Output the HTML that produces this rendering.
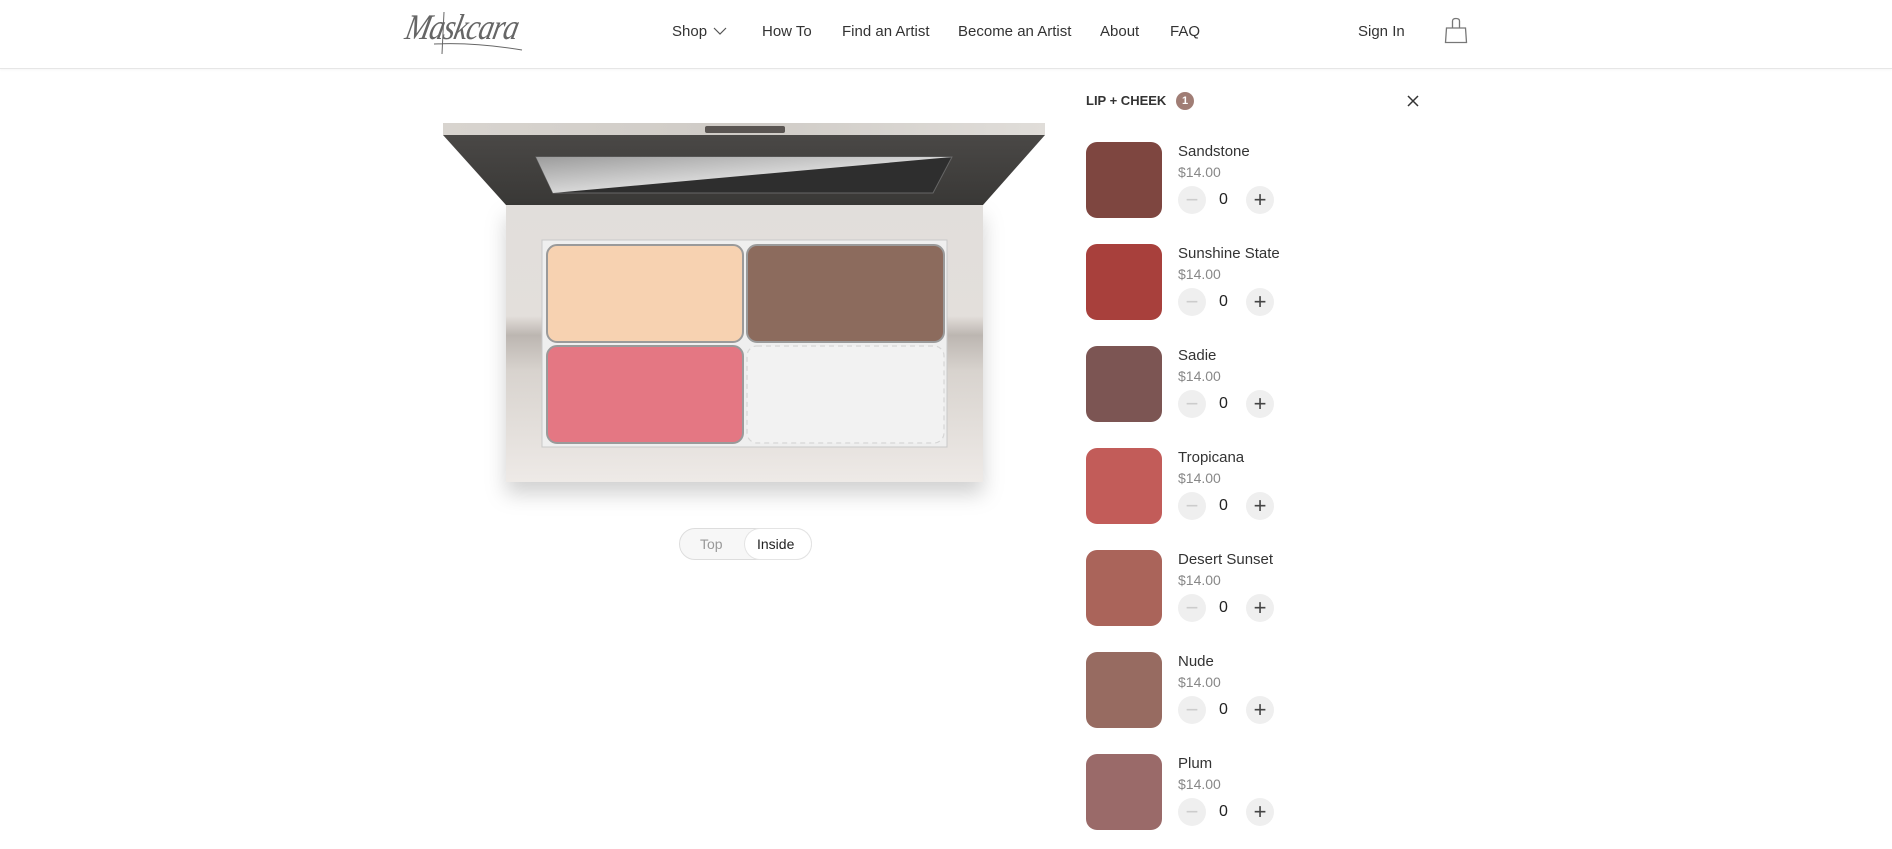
<!DOCTYPE html>
<html><head><meta charset="utf-8"><style>
*{margin:0;padding:0;box-sizing:border-box}
body{width:1892px;height:849px;background:#fff;font-family:"Liberation Sans",Arial,sans-serif;color:#333;position:relative;overflow:hidden}
.hdr{position:absolute;left:0;top:0;width:1892px;height:69px;border-bottom:1px solid #e6e6e6;box-shadow:0 1px 2px rgba(0,0,0,.04)}
.nav{position:absolute;top:23px;font-size:15px;color:#333}
.logo{position:absolute;left:406px;top:11px;font-family:"Liberation Serif",serif;font-style:italic;font-size:30px;color:#666;letter-spacing:-1px;transform:skewX(-12deg) scaleY(1.2);font-weight:normal;-webkit-text-stroke:0}
.a{position:absolute}
.sw{position:absolute;left:1086px;width:76px;height:76px;border-radius:11px}
.nm{position:absolute;left:1178px;font-size:15px;color:#333}
.pr{position:absolute;left:1178px;font-size:14px;color:#888}
.btn{position:absolute;width:28px;height:28px;border-radius:50%;background:#efefef;text-align:center;line-height:27px;font-size:22px}
.q{position:absolute;left:1219px;font-size:16px;color:#222}
</style></head><body>
<div class="hdr">
 <div class="logo">Maskcara</div>
 <svg class="a" style="left:404px;top:8px" width="125" height="48"><path d="M40 4 L38 46 M30 36 Q70 34 118 42" stroke="#666" stroke-width="1" fill="none"/></svg>
 <div class="nav" style="left:672px">Shop <svg width="14" height="10" style="margin-left:2px"><path d="M1 2 L7 8 L13 2" stroke="#555" fill="none" stroke-width="1.2"/></svg></div>
 <div class="nav" style="left:762px">How To</div>
 <div class="nav" style="left:842px">Find an Artist</div>
 <div class="nav" style="left:958px">Become an Artist</div>
 <div class="nav" style="left:1100px">About</div>
 <div class="nav" style="left:1170px">FAQ</div>
 <div class="nav" style="left:1358px">Sign In</div>
 <svg class="a" style="left:1444px;top:17px" width="24" height="27"><path d="M2.5 11 L21.5 11 L22.5 25.5 L1.5 25.5 Z" stroke="#777" fill="none" stroke-width="1.3"/><path d="M8.5 11 L8.5 4 Q8.5 1.5 12 1.5 Q15.5 1.5 15.5 4 L15.5 11" stroke="#777" fill="none" stroke-width="1.3"/></svg>
</div>

<!-- palette -->
<svg class="a" style="left:0;top:0" width="1892" height="849">
 <defs>
  <linearGradient id="strip" x1="0" x2="1"><stop offset="0" stop-color="#d8d4cf"/><stop offset=".5" stop-color="#cfcbc6"/><stop offset="1" stop-color="#e0ddd9"/></linearGradient>
  <linearGradient id="lid" x1="0" y1="0" x2="0" y2="1"><stop offset="0" stop-color="#4a4846"/><stop offset="1" stop-color="#393836"/></linearGradient>
  <linearGradient id="base" x1="0" y1="0" x2="0" y2="1"><stop offset="0" stop-color="#e1dedb"/><stop offset=".4" stop-color="#e3dfdb"/><stop offset=".47" stop-color="#bcb6b1"/><stop offset=".6" stop-color="#d8d3ce"/><stop offset="1" stop-color="#eeeae7"/></linearGradient>
  <linearGradient id="mir" x1="0" y1="0" x2="1" y2="1"><stop offset="0" stop-color="#9c9c9c"/><stop offset=".5" stop-color="#d5d5d5"/><stop offset="1" stop-color="#f0f0f0"/></linearGradient>
  <filter id="sh" x="-20%" y="-20%" width="140%" height="160%"><feDropShadow dx="0" dy="12" stdDeviation="10" flood-color="#000" flood-opacity=".18"/></filter>
 </defs>
 <rect x="443" y="123" width="602" height="12" fill="url(#strip)"/>
 <rect x="705" y="126" width="80" height="7" rx="2" fill="#5a5552"/>
 <polygon points="443,135 1045,135 983,205 506,205" fill="url(#lid)"/>
 <polygon points="536,157 952,157 933,193 553,193" fill="#2e2e2e" stroke="#666" stroke-width="1"/>
 <polygon points="536,157 952,157 553,193" fill="url(#mir)"/>
 <rect x="506" y="205" width="477" height="277" fill="url(#base)" filter="url(#sh)"/>
 <rect x="542" y="240" width="405" height="207" fill="#efefef" stroke="#c8c8c8"/>
 <rect x="547" y="245" width="196" height="97" rx="10" fill="#f7d2b1" stroke="#9a9a9a" stroke-width="2"/>
 <rect x="747" y="245" width="197" height="97" rx="10" fill="#8c6b5d" stroke="#9a9a9a" stroke-width="2"/>
 <rect x="547" y="346" width="196" height="97" rx="10" fill="#e47783" stroke="#9a9a9a" stroke-width="2"/>
 <rect x="747" y="346" width="197" height="97" rx="10" fill="#f2f2f2" stroke="#d6d6d6" stroke-width="1.2" stroke-dasharray="5 4"/>
</svg>
<div class="a" style="left:679px;top:528px;width:133px;height:32px;border:1px solid #ddd;border-radius:16px;background:#f7f7f7"></div>
<div class="a" style="left:745px;top:529px;width:66px;height:30px;border-radius:15px;background:#fff;box-shadow:0 0 0 1px #e4e4e4"></div>
<div class="a" style="left:700px;top:536px;font-size:14px;color:#999">Top</div>
<div class="a" style="left:757px;top:536px;font-size:14px;color:#222">Inside</div>

<!-- side panel -->
<div class="a" style="left:1086px;top:93px;font-size:13px;font-weight:bold;color:#333">LIP + CHEEK</div>
<div class="a" style="left:1176px;top:92px;width:18px;height:18px;border-radius:50%;background:#a07d75;color:#fff;font-size:11px;font-weight:bold;text-align:center;line-height:18px">1</div>
<svg class="a" style="left:1407px;top:95px" width="12" height="12"><path d="M1 1 L11 11 M11 1 L1 11" stroke="#333" stroke-width="1.5"/></svg>

<div class="sw" style="top:142px;background:#7e4640"></div>
<div class="nm" style="top:143px">Sandstone</div><div class="pr" style="top:164px">$14.00</div>
<div class="btn" style="left:1178px;top:186px;color:#ccc">−</div><div class="q" style="top:191px">0</div><div class="btn" style="left:1246px;top:186px;color:#444">+</div>

<div class="sw" style="top:244px;background:#a8403c"></div>
<div class="nm" style="top:245px">Sunshine State</div><div class="pr" style="top:266px">$14.00</div>
<div class="btn" style="left:1178px;top:288px;color:#ccc">−</div><div class="q" style="top:293px">0</div><div class="btn" style="left:1246px;top:288px;color:#444">+</div>

<div class="sw" style="top:346px;background:#7c5553"></div>
<div class="nm" style="top:347px">Sadie</div><div class="pr" style="top:368px">$14.00</div>
<div class="btn" style="left:1178px;top:390px;color:#ccc">−</div><div class="q" style="top:395px">0</div><div class="btn" style="left:1246px;top:390px;color:#444">+</div>

<div class="sw" style="top:448px;background:#c25c59"></div>
<div class="nm" style="top:449px">Tropicana</div><div class="pr" style="top:470px">$14.00</div>
<div class="btn" style="left:1178px;top:492px;color:#ccc">−</div><div class="q" style="top:497px">0</div><div class="btn" style="left:1246px;top:492px;color:#444">+</div>

<div class="sw" style="top:550px;background:#aa645a"></div>
<div class="nm" style="top:551px">Desert Sunset</div><div class="pr" style="top:572px">$14.00</div>
<div class="btn" style="left:1178px;top:594px;color:#ccc">−</div><div class="q" style="top:599px">0</div><div class="btn" style="left:1246px;top:594px;color:#444">+</div>

<div class="sw" style="top:652px;background:#976b61"></div>
<div class="nm" style="top:653px">Nude</div><div class="pr" style="top:674px">$14.00</div>
<div class="btn" style="left:1178px;top:696px;color:#ccc">−</div><div class="q" style="top:701px">0</div><div class="btn" style="left:1246px;top:696px;color:#444">+</div>

<div class="sw" style="top:754px;background:#9a6a69"></div>
<div class="nm" style="top:755px">Plum</div><div class="pr" style="top:776px">$14.00</div>
<div class="btn" style="left:1178px;top:798px;color:#ccc">−</div><div class="q" style="top:803px">0</div><div class="btn" style="left:1246px;top:798px;color:#444">+</div>
</body></html>
